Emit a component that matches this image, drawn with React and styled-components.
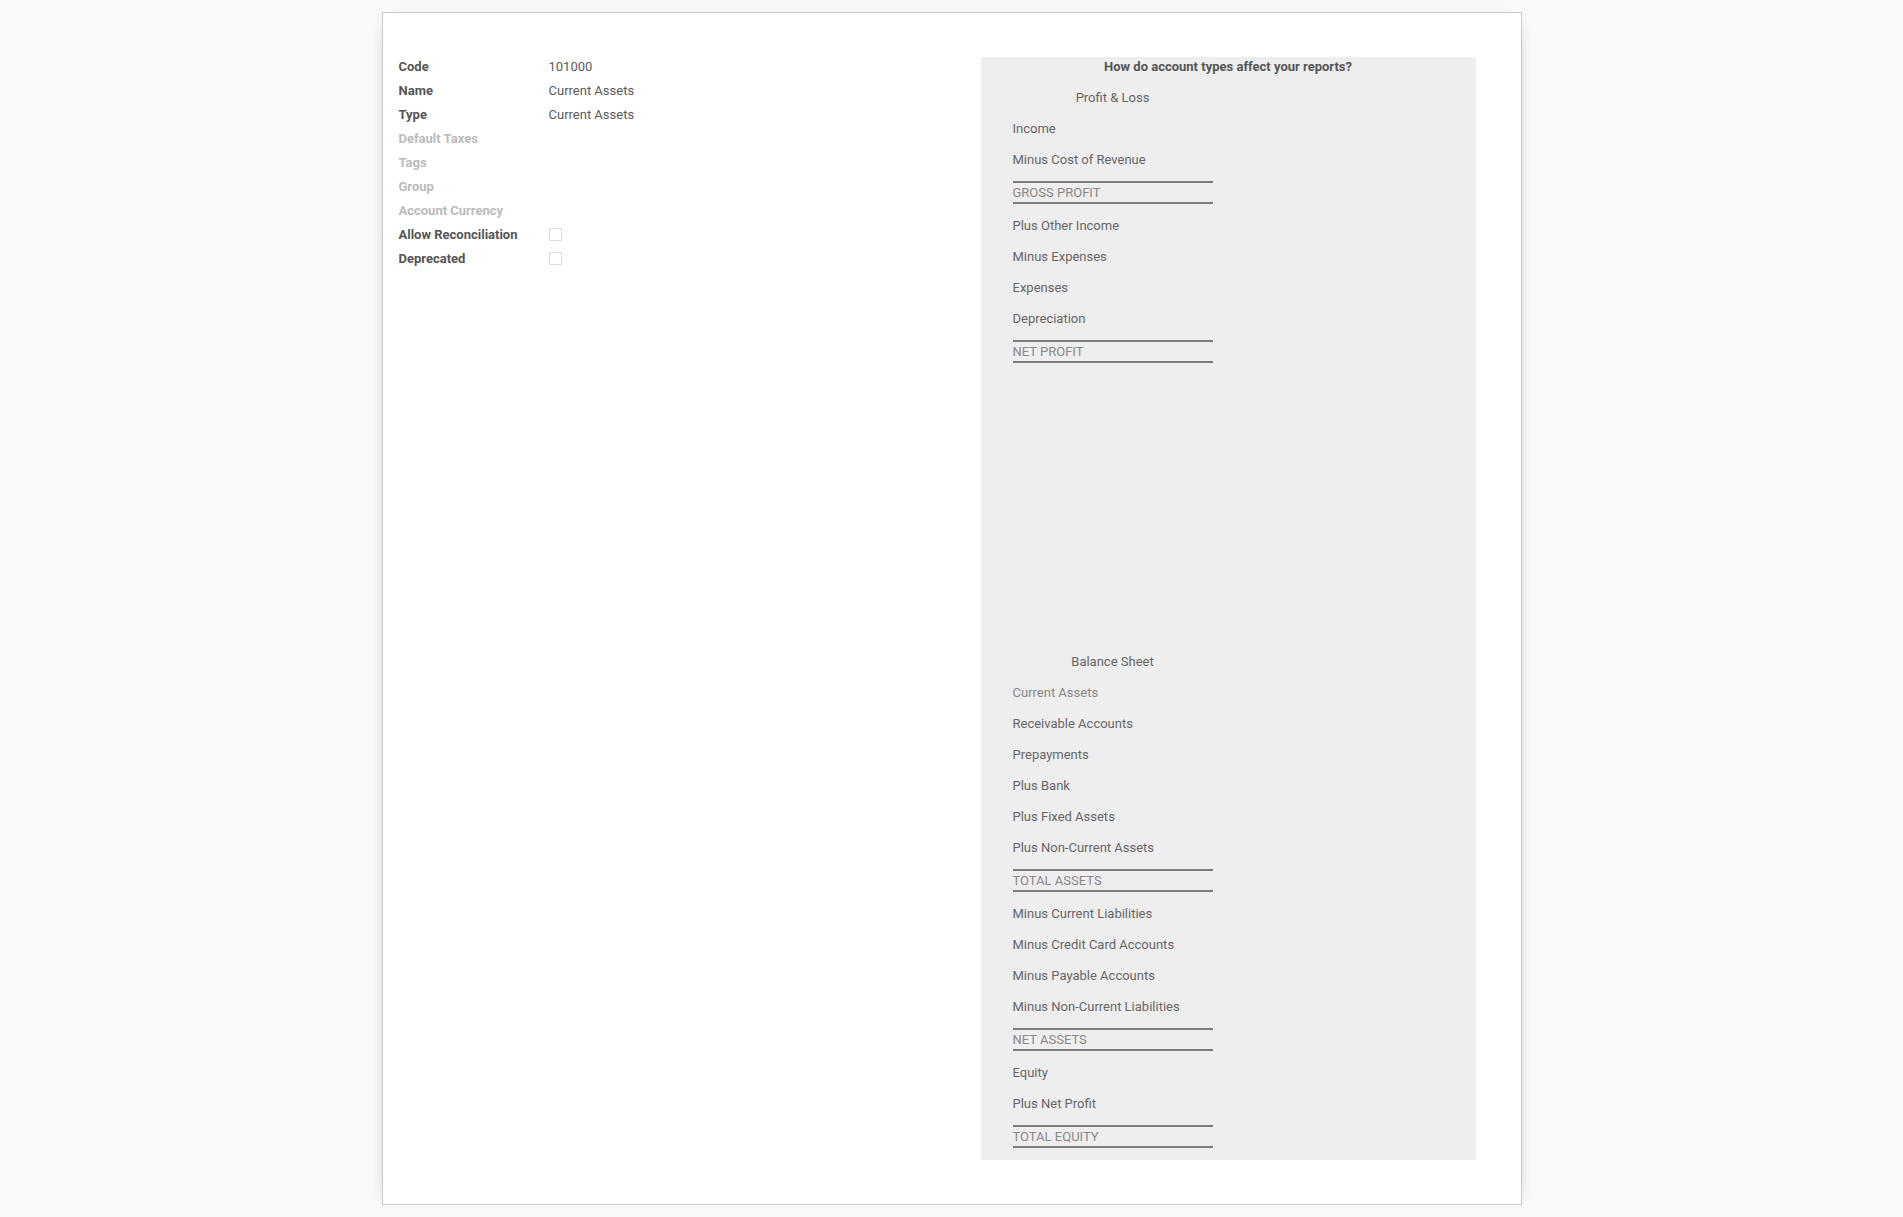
import React from "react";
import styled, { createGlobalStyle } from "styled-components";

const Global = createGlobalStyle`
  html, body { margin: 0; padding: 0; }
  body {
    background: #f9f9f9;
    font-family: Roboto, "Noto Sans", "Liberation Sans", sans-serif;
    font-size: 13px;
    color: #4c4c4c;
  }
  * { box-sizing: border-box; }
`;

const Sheet = styled.div`
  width: 1140px;
  min-height: 1193px;
  margin: 12px auto 0;
  padding: 41px 45px 44px 16px;
  background: #fff;
  border: 1px solid #c8c8d3;
  box-shadow: 0 5px 20px -15px black;
  display: grid;
  grid-template-columns: 553px 495px;
  column-gap: 29px;
  align-items: start;
`;

const Fields = styled.div`
  display: grid;
  grid-template-columns: 150px 1fr;
  grid-auto-rows: 24px;
  align-items: center;
`;

const Label = styled.div`
  font-weight: 700;
  color: ${(p) => (p.$empty ? "#bbbbbb" : "#555555")};
  white-space: nowrap;
`;

const Value = styled.div`
  color: #5a5a5a;
`;

const Check = styled.div`
  width: 13px;
  height: 13px;
  border: 1px solid #dcdcdc;
  background: #fff;
  margin-top: 1px;
`;

const Help = styled.div`
  background: #eeeeee;
  margin-top: 3px;
  padding: 0 0 6px 32px;
  color: #666;
`;

const Heading = styled.div`
  height: 20px;
  line-height: 20px;
  margin-left: -32px;
  text-align: center;
  font-weight: 700;
  color: #555;
`;

const Section = styled.div`
  width: 200px;
  margin-top: ${(p) => p.$gap}px;
`;

const Title = styled.div`
  height: 31px;
  line-height: 31px;
  text-align: center;
  color: #666;
`;

const Item = styled.div`
  height: 31px;
  line-height: 31px;
  white-space: nowrap;
  color: ${(p) => (p.$muted ? "#888" : "#666")};
`;

const Total = styled.div`
  margin: 6px 0;
  height: 23px;
  line-height: 19px;
  border-top: 2px solid #7c7c7c;
  border-bottom: 2px solid #7c7c7c;
  color: #888;
  white-space: nowrap;
`;

const fields = [
  { label: "Code", value: "101000" },
  { label: "Name", value: "Current Assets" },
  { label: "Type", value: "Current Assets" },
  { label: "Default Taxes", empty: true },
  { label: "Tags", empty: true },
  { label: "Group", empty: true },
  { label: "Account Currency", empty: true },
  { label: "Allow Reconciliation", check: true },
  { label: "Deprecated", check: true },
];

const profitLoss = [
  { t: "Income" },
  { t: "Minus Cost of Revenue" },
  { t: "GROSS PROFIT", total: true },
  { t: "Plus Other Income" },
  { t: "Minus Expenses" },
  { t: "Expenses" },
  { t: "Depreciation" },
  { t: "NET PROFIT", total: true },
];

const balance = [
  { t: "Current Assets", muted: true },
  { t: "Receivable Accounts" },
  { t: "Prepayments" },
  { t: "Plus Bank" },
  { t: "Plus Fixed Assets" },
  { t: "Plus Non-Current Assets" },
  { t: "TOTAL ASSETS", total: true },
  { t: "Minus Current Liabilities" },
  { t: "Minus Credit Card Accounts" },
  { t: "Minus Payable Accounts" },
  { t: "Minus Non-Current Liabilities" },
  { t: "NET ASSETS", total: true },
  { t: "Equity" },
  { t: "Plus Net Profit" },
  { t: "TOTAL EQUITY", total: true },
];

const renderRows = (rows) =>
  rows.map((r) =>
    r.total ? (
      <Total key={r.t}>{r.t}</Total>
    ) : (
      <Item key={r.t} $muted={r.muted}>
        {r.t}
      </Item>
    )
  );

export default function App() {
  return (
    <>
      <Global />
      <Sheet>
        <Fields>
          {fields.map((f) => (
            <React.Fragment key={f.label}>
              <Label $empty={f.empty}>{f.label}</Label>
              {f.check ? <Check /> : <Value>{f.value || ""}</Value>}
            </React.Fragment>
          ))}
        </Fields>
        <Help>
          <Heading>How do account types affect your reports?</Heading>
          <Section $gap={5}>
            <Title>Profit &amp; Loss</Title>
            {renderRows(profitLoss)}
          </Section>
          <Section $gap={283}>
            <Title>Balance Sheet</Title>
            {renderRows(balance)}
          </Section>
        </Help>
      </Sheet>
    </>
  );
}
